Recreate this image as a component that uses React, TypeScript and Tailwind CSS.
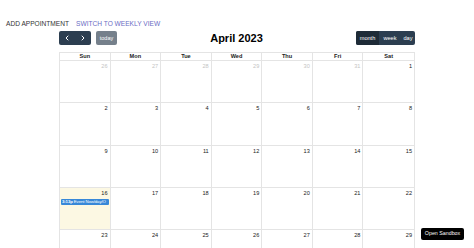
import { ChevronLeft, ChevronRight } from 'lucide-react'

const weeks = [
  [26, 27, 28, 29, 30, 31, 1],
  [2, 3, 4, 5, 6, 7, 8],
  [9, 10, 11, 12, 13, 14, 15],
  [16, 17, 18, 19, 20, 21, 22],
  [23, 24, 25, 26, 27, 28, 29],
]

const days = ['Sun', 'Mon', 'Tue', 'Wed', 'Thu', 'Fri', 'Sat']

const App = () => {
  return (
    <div className="relative h-[248px] w-[474px] overflow-hidden bg-white font-['Liberation_Sans',Arial,sans-serif] text-[#212529]">
      <div className="flex items-center gap-[7px] pl-[6px] pt-[20px] text-[6.6px] leading-[8px] uppercase">
        <span className="text-[#333]">Add Appointment</span>
        <span className="text-[#6a6cc4]">Switch to weekly view</span>
      </div>

      <div className="mx-auto mt-[3px] w-[356px]">
        {/* toolbar */}
        <div className="flex h-[14px] items-center justify-between">
          <div className="flex items-center gap-[5px]">
            <div className="flex h-[14px] w-[32px] overflow-hidden rounded-[2px] bg-[#2c3e50] text-white">
              <span className="flex flex-1 items-center justify-center">
                <ChevronLeft size={8} strokeWidth={3} />
              </span>
              <span className="flex flex-1 items-center justify-center">
                <ChevronRight size={8} strokeWidth={3} />
              </span>
            </div>
            <div className="flex h-[14px] w-[21px] items-center justify-center rounded-[2px] bg-[#75808b] text-[5.5px] text-white">
              today
            </div>
          </div>
          <h2 className="text-[11px] font-bold leading-none text-black">April 2023</h2>
          <div className="flex h-[14px] overflow-hidden rounded-[2px] bg-[#2c3e50] text-[5.6px] text-white">
            <span className="flex w-[23px] items-center justify-center bg-[#1e2b37]">month</span>
            <span className="flex w-[22px] items-center justify-center">week</span>
            <span className="flex w-[14px] items-center justify-center">day</span>
          </div>
        </div>

        {/* grid */}
        <div className="mt-[7px] border-l border-r border-t border-[#e4e4e4]">
          <div className="grid h-[8px] grid-cols-7 border-b border-[#e4e4e4]">
            {days.map((d) => (
              <div
                key={d}
                className="flex items-center justify-center border-r border-[#e4e4e4] text-[5.6px] font-bold leading-none text-[#222] last:border-r-0"
              >
                {d}
              </div>
            ))}
          </div>
          {weeks.map((week, wi) => (
            <div key={wi} className="grid h-[42.3px] grid-cols-7 border-b border-[#e4e4e4]">
              {week.map((n, di) => {
                const other = wi === 0 && di < 6
                const today = wi === 3 && di === 0
                return (
                  <div
                    key={di}
                    className={`flex flex-col border-r border-[#e4e4e4] last:border-r-0 ${today ? 'bg-[#fcf8e3]' : ''}`}
                  >
                    <div
                      className={`pr-[2px] pt-[2px] text-right text-[5.6px] leading-[6px] ${other ? 'text-[#c4c4c4]' : 'text-[#222]'}`}
                    >
                      {n}
                    </div>
                    {today && (
                      <div className="mx-[1px] mt-[3px] h-[6px] overflow-hidden whitespace-nowrap rounded-[1px] bg-[#3788d8] px-[1px] text-[4.3px] leading-[6px] tracking-[-0.1px] text-white">
                        <b>3:13p</b> Event Now/day/O
                      </div>
                    )}
                  </div>
                )
              })}
            </div>
          ))}
        </div>
      </div>

      <div className="absolute left-[421px] top-[228px] flex h-[12px] w-[43px] items-center justify-center rounded-[2px] bg-black text-[5.3px] text-white">
        Open Sandbox
      </div>
    </div>
  )
}

export default App
